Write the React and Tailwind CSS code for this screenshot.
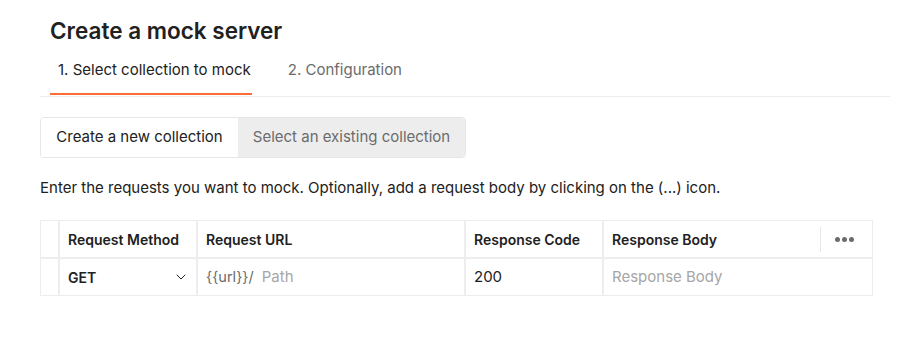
import { ChevronDown } from 'lucide-react'

export default function App() {
  return (
    <div className="w-[907px] h-[337px] bg-white text-[#212121] pl-10 pr-[17px]" style={{ fontFamily: 'Inter, "Noto Sans", sans-serif' }}>
      <h1 className="pl-[10px] pt-[17px] text-[22.5px] leading-[28px] font-semibold">Create a mock server</h1>
      <div className="mt-[7px] border-b border-[#ededed] pb-[1px]">
        <div className="flex gap-[28px] pl-[10px]">
          <div className="pl-2 pr-[1px] pt-[8px] pb-[13px] text-[15px] leading-[20px] border-b-2 border-[#ff6c37]">1. Select collection to mock</div>
          <div className="pl-2 pt-[8px] pb-[13px] text-[15px] leading-[20px] text-[#6b6b6b]">2. Configuration</div>
        </div>
      </div>
      <div className="mt-[20px] inline-flex rounded border border-[#e6e6e6] overflow-hidden text-[15px]">
        <div className="w-[197px] h-[39px] flex items-center justify-center bg-white">Create a new collection</div>
        <div className="w-[227px] h-[39px] flex items-center justify-center bg-[#ededed] text-[#6b6b6b]">Select an existing collection</div>
      </div>
      <p className="mt-[19px] text-[15px] leading-[22px]">Enter the requests you want to mock. Optionally, add a request body by clicking on the (...) icon.</p>
      <div className="mt-[21px] w-[833px] border border-[#ededed] text-[14px]">
        <div className="flex h-[38px] border-b-2 border-[#ededed] font-semibold">
          <div className="w-[19px] border-r-2 border-[#ededed]"></div>
          <div className="w-[138px] border-r-2 border-[#ededed] flex items-center px-[8px]">Request Method</div>
          <div className="w-[268px] border-r-2 border-[#ededed] flex items-center px-[8px]">Request URL</div>
          <div className="w-[138px] border-r-2 border-[#ededed] flex items-center px-[8px]">Response Code</div>
          <div className="flex-1 flex items-center pl-[8px]">
            <span className="flex-1">Response Body</span>
            <div className="w-[52px] h-[25px] border-l border-[#e6e6e6] flex items-center justify-center gap-[2px] pr-[4px]">
              <span className="w-[5px] h-[5px] rounded-full bg-[#6b6b6b]"></span>
              <span className="w-[5px] h-[5px] rounded-full bg-[#6b6b6b]"></span>
              <span className="w-[5px] h-[5px] rounded-full bg-[#6b6b6b]"></span>
            </div>
          </div>
        </div>
        <div className="flex h-[36px]">
          <div className="w-[19px] border-r-2 border-[#ededed]"></div>
          <div className="w-[138px] border-r-2 border-[#ededed] flex items-center justify-between pl-[8px] pr-[7px] font-semibold">
            <span>GET</span>
            <ChevronDown size={16} strokeWidth={1.5} className="text-[#212121]" />
          </div>
          <div className="w-[268px] border-r-2 border-[#ededed] flex items-center px-[8px] text-[15px]">
            <span className="text-[14.5px] text-[#6b6b6b]">{'{{url}}/'}</span>
            <span className="ml-[8px] text-[#a6a6a6]">Path</span>
          </div>
          <div className="w-[138px] border-r-2 border-[#ededed] flex items-center px-[8px] text-[15px]">200</div>
          <div className="flex-1 flex items-center pl-[8px] text-[15px] text-[#a6a6a6]">Response Body</div>
        </div>
      </div>
    </div>
  )
}
